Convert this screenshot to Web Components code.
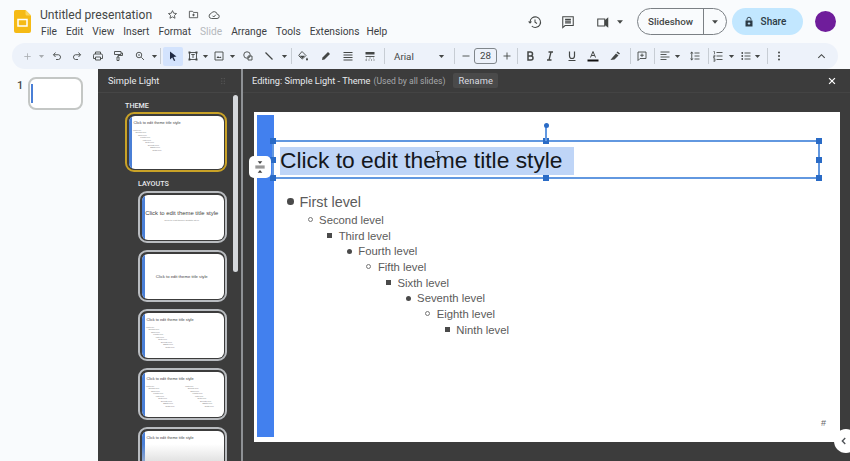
<!DOCTYPE html>
<html>
<head>
<meta charset="utf-8">
<title>Untitled presentation</title>
<style>
    html, body { margin: 0; height: 100%; overflow: hidden; }
    body {
        width: 850px; height: 461px;
        display: flex; flex-direction: column;
        background: #f9fbfd; color: #444746;
        font-family: Roboto, "Liberation Sans", sans-serif;
    }
</style>
</head>
<body>
<app-header></app-header>
<tool-bar></tool-bar>
<main-area></main-area>

<script>
const ICONS = {
    plus: '<path d="M12 5v14M5 12h14"/>',
    minus: '<path d="M5 12h14"/>',
    undo: '<path d="M9 5 5 9.500 9 14M5 9.500h10a4.800 4.800 0 0 1 0 9.500h-5"/>',
    redo: '<path d="M15 5l4 4.500-4 4.500M19 9.500H9a4.800 4.800 0 0 0 0 9.500h5"/>',
    print: '<path d="M7 8V4h10v4M7 17H3v-6.500A2.500 2.500 0 0 1 5.500 8h13a2.500 2.500 0 0 1 2.500 2.500V17h-4"/><path d="M7 14h10v6H7z"/>',
    paint: '<path d="M5 3h13v6H5zM18 6h3v5h-9v3M10 14h4v7h-4z"/>',
    zoom: '<circle cx="10" cy="10" r="5.500"/><path d="M14.500 14.500 20 20M8 10h4"/>',
    cursor: '<path class="fill" d="M6 3l13 10-6 1 3.500 7-2.500 1-3.500-7L6 19z"/>',
    textbox: '<path d="M5 5h14v14H5z"/><path class="fill" d="M3 3h4v4H3zM17 3h4v4h-4zM3 17h4v4H3zM17 17h4v4h-4z"/><path d="M8.500 9h7M12 9v7"/>',
    image: '<path d="M4 4h16v16H4z"/><path class="fill" d="M7 16l3-4 2.500 3 2-2 2.500 3z"/>',
    shape: '<circle cx="10" cy="10" r="6.500"/><path d="M12 12h8v8h-8z"/>',
    line: '<path d="M5 5l14 14" stroke-width="2.600"/>',
    fill: '<path d="M10 3l8 8-6.500 6.500a1.500 1.500 0 0 1-2 0L4 12a1.500 1.500 0 0 1 0-2z"/><path class="fill" d="M5 11.500h11L11 17zM20 15c1.500 2 2 3 2 4a2 2 0 0 1-4 0c0-1 .5-2 2-4z"/>',
    pen: '<path class="fill" d="M4 20l1-5L16 4l4 4L9 19z"/>',
    lines: '<path d="M3 5h18M3 10h18M3 15h18M3 20h18" stroke-width="2.200"/>',
    dash: '<path class="fill" d="M3 4h18v5H3z"/><path d="M3 13h18M3 20h3M9 20h2M14 20h2M19 20h2M5 16h1M11 16h2M18 16h1"/>',
    bold: '<path stroke-width="3" d="M8 4h5a4 4 0 0 1 0 8H8zM8 12h6a4 4 0 0 1 0 8H8z"/>',
    italic: '<path stroke-width="2.600" d="M9 4h9M6 20h9M14 4l-4 16"/>',
    underline: '<path stroke-width="2.400" d="M7 3v9a5 5 0 0 0 10 0V3M5 21h14"/>',
    color: '<path stroke-width="2" d="M7 15 12 3l5 12M8.500 11h7"/><path class="fill" style="fill:#111" d="M1 19h22v4H1z"/>',
    marker: '<path class="fill" d="M3 20l3-4 8-9 5 4-8 8zM15 5l2-2 5 4-2 2z"/>',
    addComment: '<path d="M4 4h16v13H8l-4 4z"/><path d="M12 7v7M8.500 10.500h7"/>',
    alignLeft: '<path d="M3 4h18M3 9h12M3 14h18M3 19h12"/>',
    lineSpacing: '<path d="M11 6h10M11 12h10M11 18h10"/><path class="fill" d="M5.500 3 9 7H2zM5.500 21 2 17h7z"/><path d="M5.500 7v10"/>',
    numList: '<path d="M9 5h12M9 12h12M9 19h12"/><path stroke-width="1.400" d="M3 3h2v5M3 10.500h3V13H3v2.500h3M3 17.500h3v5H3M3 20h3"/>',
    bulletList: '<path d="M9 6h12M9 12h12M9 18h12"/><circle class="fill" cx="4.500" cy="6" r="1.800"/><circle class="fill" cx="4.500" cy="12" r="1.800"/><circle class="fill" cx="4.500" cy="18" r="1.800"/>',
    more: '<circle class="fill" cx="12" cy="5" r="2"/><circle class="fill" cx="12" cy="12" r="2"/><circle class="fill" cx="12" cy="19" r="2"/>',
    up: '<path stroke-width="2.400" d="M5 15l7-7 7 7"/>',
    star: '<path d="M12 3.500l2.600 5.700 6.200.7-4.600 4.200 1.300 6.100L12 17.200l-5.500 3 1.300-6.100-4.600-4.200 6.200-.7z"/>',
    folder: '<path d="M3 5h7l2 2.500h9V19H3z"/><path d="M12 10v6M9 13h6"/>',
    cloud: '<path d="M7 19a5 5 0 0 1-.8-9.900 6.500 6.500 0 0 1 12.300 1.500A4.200 4.200 0 0 1 18 19z"/><path d="M9 13.500l2.500 2.500 4-4.500"/>',
    history: '<path d="M3.500 12A9 9 0 1 1 6.500 19"/><path class="fill" d="M0 11h7l-3.500 4z"/><path d="M12 7.500V12.500l3.500 2"/>',
    comment: '<path d="M3 3h18v15H7l-4 3.500z"/><path d="M7 7.500h10M7 10.500h10M7 13.500h10"/>',
    video: '<path d="M3 7h12v12H3z"/><path class="fill" d="M15 9l6-5v18l-6-5z"/>',
    lock: '<path class="fill" d="M5 9h14v12H5z"/><path d="M8 9V6.500a4 4 0 0 1 8 0V9"/><circle cx="12" cy="15" r="1.500" style="stroke:#c2e7ff;fill:#c2e7ff"/>',
    close: '<path stroke-width="3" d="M5 5l14 14M19 5 5 19"/>',
    caret: '<path class="fill" style="stroke:none" d="M5 8h14l-7 8z"/>',
    left: '<path stroke-width="3.200" d="M15 5l-7 7 7 7"/>',
    grip: '<circle class="fill" cx="9" cy="6" r="1.500"/><circle class="fill" cx="15" cy="6" r="1.500"/><circle class="fill" cx="9" cy="12" r="1.500"/><circle class="fill" cx="15" cy="12" r="1.500"/><circle class="fill" cx="9" cy="18" r="1.500"/><circle class="fill" cx="15" cy="18" r="1.500"/>',
    distribute: '<path class="fill" d="M8 2h8l-4 5zM8 22h8l-4-5z"/><path d="M4 10.500h16M4 13.500h16" stroke-width="1.500"/>'
}

class GIcon extends HTMLElement {
    connectedCallback() {
        const size = this.getAttribute('size') || 12
        const name = this.getAttribute('name')
        const sw = this.getAttribute('sw') || 1.8
        this.attachShadow({ mode: 'open' }).innerHTML = `
            <style>
                :host { display: inline-flex; align-items: center; justify-content: center; flex: none; color: inherit; }
                svg { flex: none; display: block; overflow: visible; fill: none; stroke: currentColor; stroke-width: ${sw}; }
                .fill { fill: currentColor; stroke: none; }
            </style>
            <svg width="${size}" height="${size}" viewBox="0 0 24 24">${ICONS[name] || ''}</svg>`
    }
}
customElements.define('g-icon', GIcon)

class AppHeader extends HTMLElement {
    constructor() {
        super()
        this.attachShadow({ mode: 'open' }).innerHTML = `
            <style>
                :host { display: flex; flex: none; height: 43px; align-items: flex-start; padding-left: 14px; padding-right: 14px; color: #444746; }
                .logo { margin-top: 10px; margin-right: 9px; flex: none; display: block; }
                .doc { flex: 1; padding-top: 6px; }
                .name { display: flex; align-items: center; height: 17px; }
                .title { font-size: 12.100px; color: #444746; width: 121.500px; white-space: nowrap; }
                .name g-icon { width: 21px; }
                nav { display: flex; font-size: 10.200px; margin-top: 3px; margin-left: 1px; color: #3c4043; }
                nav span { margin-right: 9px; }
                nav .off { color: #b4b8bc; }
                .actions { display: flex; align-items: center; height: 27px; margin-top: 8px; }
                .round { width: 33px; justify-content: center; display: inline-flex; }
                .slideshow { display: flex; align-items: center; width: 90px; height: 27px; box-sizing: border-box; border: 1px solid #7b8085; border-radius: 14px; font-size: 9.800px; font-weight: 500; margin-left: 2px; }
                .slideshow b { font-weight: 500; width: 65px; text-align: center; border-right: 1px solid #7b8085; line-height: 25px; }
                .slideshow g-icon { flex: 1; }
                .share { display: flex; align-items: center; justify-content: center; gap: 6px; width: 71px; height: 27px; box-sizing: border-box; padding-right: 6px; border-radius: 14px; background: #c2e7ff; margin-left: 5px; font-size: 10px; font-weight: 500; color: #2c3a44; }
                .avatar { width: 21px; height: 21px; border-radius: 50%; background: #6f1d9b; margin-left: 12px; }
            </style>
            <svg class="logo" width="17" height="23" viewBox="0 0 17 23">
                <path fill="#f5ba15" d="M2 0h9.500L17 5.500V21a2 2 0 0 1-2 2H2a2 2 0 0 1-2-2V2a2 2 0 0 1 2-2z"/>
                <path fill="#fbd65f" d="M11.500 0 17 5.500h-4a1.500 1.500 0 0 1-1.500-1.500z"/>
                <rect x="4" y="9.500" width="9" height="6.500" fill="none" stroke="#fff" stroke-width="1.500"/>
            </svg>
            <div class="doc">
                <div class="name">
                    <span class="title">Untitled presentation</span>
                    <g-icon name="star" size="11"></g-icon>
                    <g-icon name="folder" size="11"></g-icon>
                    <g-icon name="cloud" size="12"></g-icon>
                </div>
                <nav>
                    <span>File</span><span>Edit</span><span>View</span><span>Insert</span><span>Format</span>
                    <span class="off">Slide</span><span>Arrange</span><span>Tools</span><span style="margin-right:7px">Extensions</span><span>Help</span>
                </nav>
            </div>
            <div class="actions">
                <span class="round"><g-icon name="history" size="14"></g-icon></span>
                <span class="round"><g-icon name="comment" size="14"></g-icon></span>
                <span class="round" style="width:22px;margin-left:8px"><g-icon name="video" size="14"></g-icon></span>
                <g-icon name="caret" size="10" style="width:12px"></g-icon>
                <div style="width:9px"></div>
                <div class="slideshow"><b>Slideshow</b><g-icon name="caret" size="10"></g-icon></div>
                <div class="share"><g-icon name="lock" size="12"></g-icon>Share</div>
                <div class="avatar"></div>
            </div>`
    }
}
customElements.define('app-header', AppHeader)

class ToolBar extends HTMLElement {
    constructor() {
        super()
        // cells sit edge to edge, so the widths set the spacing
        const cell = (name, w, extra = '') =>
            `<g-icon name="${name}" size="${name === 'caret' ? 9 : 12}" style="width:${w}px;${extra}"></g-icon>`
        const sep = w => `<i class="sep" style="width:${w}px"></i>`
        this.attachShadow({ mode: 'open' }).innerHTML = `
            <style>
                :host { display: flex; flex: none; align-items: center; height: 26px; margin: 0 12px; padding-left: 9px; padding-right: 7px; background: #edf2fa; border-radius: 13px; color: #444746; font-size: 9.800px; }
                .sep { display: flex; justify-content: center; flex: none; height: 16px; }
                .sep::before { content: ""; width: 1px; background: #c7cdd4; }
                .dim { color: #a9adb1; }
                .active { display: flex; align-items: center; justify-content: center; width: 20px; height: 19px; background: #d3e3fd; border-radius: 2px; flex: none; color: #1f2a44; }
                .font { width: 50px; padding-left: 8px; box-sizing: border-box; flex: none; }
                .size { width: 23px; height: 16px; box-sizing: border-box; margin-left: 4px; border: 1px solid #80868b; border-radius: 3px; text-align: center; line-height: 14px; flex: none; }
                .end { margin-left: auto; }
            </style>
            <g-icon class="dim" name="plus" size="11" style="width:12px"></g-icon>
            <g-icon class="dim" name="caret" size="9" style="width:16px"></g-icon>
            ${cell('undo', 16)}${cell('redo', 24)}${cell('print', 18)}${cell('paint', 22)}${cell('zoom', 22)}${cell('caret', 6)}${sep(6)}
            <div class="active"><g-icon name="cursor" size="12"></g-icon></div>
            ${cell('textbox', 14, 'margin-left:3px')}${cell('caret', 10)}${cell('image', 18)}${cell('caret', 8)}${cell('shape', 24)}${cell('line', 18)}${cell('caret', 12)}${sep(2)}
            ${cell('fill', 22)}${cell('pen', 24)}${cell('lines', 20)}${cell('dash', 24)}${sep(4)}
            <span class="font">Arial</span>${cell('caret', 10)}${sep(16)}
            ${cell('minus', 8)}<span class="size">28</span>${cell('plus', 19)}${sep(3)}
            ${cell('bold', 22)}${cell('italic', 18)}${cell('underline', 26)}${cell('color', 16)}${cell('marker', 28)}${sep(2)}
            ${cell('addComment', 22)}${sep(2)}
            ${cell('alignLeft', 20)}${cell('caret', 4)}
            ${cell('lineSpacing', 22, 'margin-left:5px')}${sep(4)}
            ${cell('numList', 16)}${cell('caret', 10)}${cell('bulletList', 20)}${cell('caret', 2)}${sep(18)}
            ${cell('more', 6)}
            <g-icon class="end" name="up" size="11" style="width:20px"></g-icon>`
    }
}
customElements.define('tool-bar', ToolBar)

const levels = ['First level', 'Second level', 'Third level', 'Fourth level', 'Fifth level', 'Sixth level', 'Seventh level', 'Eighth level', 'Ninth level']
const MARKS = ['dot', 'ring', 'square']

class MiniSlide extends HTMLElement {
    connectedCallback() {
        const kind = this.getAttribute('kind')
        const list = `<div class="list">${levels.map((l, i) => `<div style="padding-left:${i * 2.450}px">${l}</div>`).join('')}</div>`
        const title = t => `<div class="${t}">Click to edit theme title style</div>`
        let body = ''
        if (kind === 'cover') body = `<div class="center">${title('big')}<div class="sub">Click to edit theme subtitle style</div></div>`
        if (kind === 'section') body = `<div class="center">${title('mid')}</div>`
        if (kind === 'content') body = title('top') + list
        if (kind === 'two') body = title('top') + `<div class="cols">${list}${list}</div>`
        if (kind === 'titled') body = title('top') + '<div class="fade"></div>'
        this.attachShadow({ mode: 'open' }).innerHTML = `
            <style>
                :host { display: block; flex: none; box-sizing: border-box; height: var(--h, 52px); border: 2px solid var(--ring, #b9bcc0); border-radius: 9px; padding: 1.500px; margin-bottom: 7px; }
                .page { position: relative; display: flex; height: 100%; background: #fff; border-radius: 6px; overflow: hidden; font-family: "Liberation Sans", sans-serif; color: #444; }
                .bar { width: 3.500px; flex: none; background: #4a7fd6; }
                .in { flex: 1; min-width: 0; display: flex; flex-direction: column; }
                .top { font-size: 3.800px; padding: 5px 0 0 1.500px; white-space: nowrap; }
                .center { flex: 1; display: flex; flex-direction: column; align-items: center; justify-content: center; white-space: nowrap; padding-right: 5px; }
                .big { font-size: 5.900px; margin-top: -2px; }
                .mid { font-size: 4.200px; }
                .sub { font-size: 2.500px; color: #888; margin-top: 3px; }
                .list { font-size: 1.900px; line-height: 2.500px; color: #777; padding: 4px 0 0 1px; white-space: nowrap; }
                .cols { display: flex; }
                .cols .list { width: 50%; }
                .fade { position: absolute; left: 0; right: 0; bottom: 0; height: 70%; background: linear-gradient(transparent, #c9c9c9); }
            </style>
            <div class="page"><div class="bar"></div><div class="in">${body}</div></div>`
    }
}
customElements.define('mini-slide', MiniSlide)

class FilmStrip extends HTMLElement {
    constructor() {
        super()
        this.attachShadow({ mode: 'open' }).innerHTML = `
            <style>
                :host { display: flex; flex: none; width: 98px; box-sizing: border-box; padding: 8px 0 0 17px; align-items: flex-start; gap: 5px; font-size: 11px; color: #444746; }
                .num { margin-top: 2px; font-weight: 500; }
                .thumb { box-sizing: border-box; width: 55px; height: 33px; background: #fff; border: 2px solid #c4c7c5; border-radius: 8px; padding: 5px 0 5px 1px; }
                .thumb i { display: block; width: 1.500px; height: 100%; background: #4a7fd6; }
            </style>
            <span class="num">1</span>
            <div class="thumb"><i></i></div>`
    }
}
customElements.define('film-strip', FilmStrip)

class ThemePanel extends HTMLElement {
    constructor() {
        super()
        this.attachShadow({ mode: 'open' }).innerHTML = `
            <style>
                :host { position: relative; display: flex; flex-direction: column; flex: none; width: 143px; height: 100%; background: #3c3c3c; color: #e8eaed; overflow: hidden; border-right: 2px solid #8f9296; }
                .head { display: flex; align-items: center; justify-content: space-between; flex: none; height: 23px; padding: 0 8px 0 10px; margin-right: 5px; border-bottom: 1px solid #464646; font-size: 9.300px; }
                .head g-icon { color: #5c5c5c; }
                .list { padding: 7px 0 0 27px; width: 102px; box-sizing: content-box; }
                .label { font-size: 7.200px; font-weight: 500; line-height: 11px; margin-bottom: 1px; }
                .layouts { margin-left: 13px; }
                .layouts .label { margin-top: -1px; margin-bottom: 2px; }
                .scroll { position: absolute; top: 26px; left: 135px; width: 5px; height: 177px; border-radius: 3px; background: #d5d8dc; }
            </style>
            <div class="head">Simple Light<g-icon name="grip" size="10"></g-icon></div>
            <div class="list">
                <div class="label">THEME</div>
                <mini-slide kind="content" style="--h:60px;--ring:#c9a227"></mini-slide>
                <div class="layouts">
                    <div class="label">LAYOUTS</div>
                    <mini-slide kind="cover"></mini-slide>
                    <mini-slide kind="section"></mini-slide>
                    <mini-slide kind="content"></mini-slide>
                    <mini-slide kind="two"></mini-slide>
                    <mini-slide kind="titled"></mini-slide>
                </div>
            </div>
            <div class="scroll"></div>`
    }
}
customElements.define('theme-panel', ThemePanel)

class MasterSlide extends HTMLElement {
    constructor() {
        super()
        const rows = levels.map((l, i) => `
            <div class="row" style="padding-left:${i * 19.600}px">
                <span class="mark"><i class="${MARKS[i % 3]}"></i></span><span>${l}</span>
            </div>`).join('')
        const handles = [[0, 0], [50, 0], [100, 0], [0, 50], [100, 50], [0, 100], [50, 100], [100, 100]]
            .map(([x, y]) => `<i class="handle" style="left:${x}%;top:${y}%"></i>`).join('')
        this.attachShadow({ mode: 'open' }).innerHTML = `
            <style>
                :host { display: flex; flex: 1; background: #fff; position: relative; padding: 3px 0 5px 3px; font-family: "Liberation Sans", sans-serif; }
                .bar { width: 17px; flex: none; background: #4280ee; }
                .content { flex: 1; display: flex; flex-direction: column; }
                .title { position: relative; box-sizing: border-box; height: 39px; width: 548px; margin-top: 25px; padding: 5px 0 0 6px; border: 2px solid #6298e0; margin-left: -2px; }
                .sel { display: inline-block; background: #bfd5f7; width: 294px; height: 28px; font-size: 22.800px; line-height: 27px; color: #14171c; white-space: nowrap; }
                .frame { position: absolute; inset: -1px; }
                .handle { position: absolute; width: 6px; height: 6px; margin: -3px 0 0 -3px; background: #2a6bc6; }
                .rot { position: absolute; left: 50%; top: -16px; width: 2px; height: 16px; background: #6298e0; margin-left: -1px; }
                .rot::before { content: ""; position: absolute; left: -1.500px; top: -2px; width: 5px; height: 5px; border-radius: 50%; background: #2a6bc6; }
                .beam { position: absolute; left: 161px; top: 9px; color: #444; }
                .body { padding: 12px 0 0 14px; color: #5b5b5b; font-size: 11.300px; }
                .row { display: flex; align-items: center; height: 15.700px; white-space: nowrap; }
                .mark { width: 11.500px; flex: none; display: flex; align-items: center; }
                .mark i { display: block; box-sizing: border-box; width: 5px; height: 5px; background: #4a4a4a; }
                .mark .dot { border-radius: 50%; }
                .mark .ring { border-radius: 50%; background: none; border: 1px solid #777; }
                .row:first-child { font-size: 14.400px; height: 21px; }
                .row:first-child .mark i { width: 6.500px; height: 6.500px; margin-left: -1px; }
                .num { position: absolute; right: 14px; bottom: 14px; font-size: 9px; color: #666; }
                .align { position: absolute; left: -5px; top: 44px; width: 22px; height: 22px; border-radius: 5px; background: #fff; display: flex; align-items: center; justify-content: center; color: #444; }
            </style>
            <div class="bar"></div>
            <div class="content">
                <div class="title">
                    <span class="sel">Click to edit theme title style</span>
                    <div class="frame">${handles}<i class="rot"></i></div>
                    <svg class="beam" width="5" height="9" viewBox="0 0 5 9"><path d="M.5.500h4M2.500.500v8M.5 8.500h4" fill="none" stroke="currentColor"/></svg>
                </div>
                <div class="body">${rows}</div>
            </div>
            <div class="align"><g-icon name="distribute" size="14"></g-icon></div>
            <div class="num">#</div>`
    }
}
customElements.define('master-slide', MasterSlide)

class EditorPane extends HTMLElement {
    constructor() {
        super()
        this.attachShadow({ mode: 'open' }).innerHTML = `
            <style>
                :host { position: relative; flex: 1; display: flex; flex-direction: column; min-width: 0; background: #3c3c3c; color: #e8eaed; overflow: hidden; }
                .head { display: flex; align-items: center; flex: none; height: 23px; padding: 0 13px 0 9px; border-bottom: 1px solid #444; font-size: 9.200px; white-space: nowrap; }
                .used { color: #a6a8ab; font-size: 8.600px; margin-left: 3px; }
                .rename { margin-left: 8px; height: 15px; line-height: 16px; padding: 0 5px; background: #4a4a4a; border-radius: 2px; font-size: 9.300px; letter-spacing: .1px; color: #dadce0; }
                .close { margin-left: auto; color: #fff; }
                .stage { flex: 1; display: flex; padding: 19px 10px 19px 11px; min-height: 0; }
                .expand { position: absolute; right: -8px; bottom: 8px; width: 24px; height: 24px; border-radius: 50%; background: #fff; display: flex; align-items: center; padding-left: 5px; box-sizing: border-box; color: #4d5156; }
            </style>
            <div class="head">
                Editing: Simple Light - Theme
                <span class="used">(Used by all slides)</span>
                <span class="rename">Rename</span>
                <g-icon class="close" name="close" size="10"></g-icon>
            </div>
            <div class="stage"><master-slide></master-slide></div>
            <div class="expand"><g-icon name="left" size="10"></g-icon></div>`
    }
}
customElements.define('editor-pane', EditorPane)

class MainArea extends HTMLElement {
    constructor() {
        super()
        this.attachShadow({ mode: 'open' }).innerHTML = `
            <style>
                :host { display: flex; flex: 1; min-height: 0; }
            </style>
            <film-strip></film-strip>
            <theme-panel></theme-panel>
            <editor-pane></editor-pane>`
    }
}
customElements.define('main-area', MainArea)
</script>
</body>
</html>
